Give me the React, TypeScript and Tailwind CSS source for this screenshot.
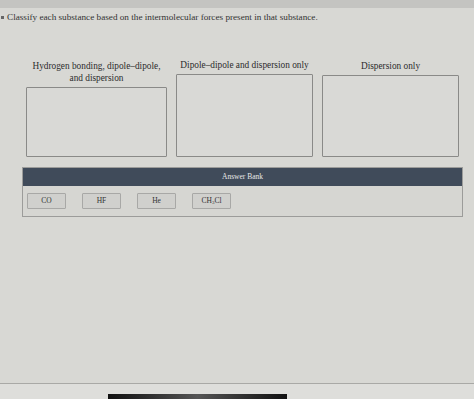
import React from 'react';

const columns = [
  { label: ['Hydrogen bonding, dipole–dipole,', 'and dispersion'], width: 'w-[141px]', height: 'h-[70px]' },
  { label: ['Dipole–dipole and dispersion only'], width: 'w-[137px]', height: 'h-[83px]' },
  { label: ['Dispersion only'], width: 'w-[137px]', height: 'h-[82px]' },
];

const tiles: React.ReactNode[] = [
  'CO',
  'HF',
  'He',
  <>
    CH<sub className="text-[5px] align-baseline relative top-[2px]">3</sub>Cl
  </>,
];

const App: React.FC = () => {
  return (
    <div className="w-[474px] h-[399px] overflow-hidden flex flex-col bg-[#d8d8d4] text-[#2a2a2a] font-['Liberation_Serif',serif]">
      <div className="h-[8px] bg-[#c4c4c1] shrink-0" />

      <div className="flex items-center h-[19px] pl-[1px] text-[9.2px] text-[#333]">
        <span className="w-[3px] h-[3px] bg-[#666] mr-[3px]" />
        <span>Classify each substance based on the intermolecular forces present in that substance.</span>
      </div>

      <div className="flex items-end gap-[9px] pl-[26px] mt-[32px]">
        {columns.map((col, i) => (
          <div key={i} className={`flex flex-col items-center ${col.width}`}>
            <div className="text-[9.3px] leading-[12px] text-center text-[#2c2c2c] mb-[3px]">
              {col.label.map((l, j) => (
                <div key={j}>{l}</div>
              ))}
            </div>
            <div className={`w-full ${col.height} border border-[#8a8a88] rounded-[1px] bg-[#d9d9d6]`} />
          </div>
        ))}
      </div>

      <div className="mx-[22px] mt-[10px] w-[441px] border border-[#9c9c9a] bg-[#d6d6d2]">
        <div className="h-[18px] bg-[#404b5a] flex items-center justify-center text-[7.5px] text-[#e8e8e8]">
          Answer Bank
        </div>
        <div className="flex gap-[16px] pl-[4px] pt-[7px] pb-[7px]">
          {tiles.map((t, i) => (
            <div
              key={i}
              className="w-[39px] h-[16px] flex items-center justify-center border border-[#a8a8a6] rounded-[1px] bg-[#d0d0cd] text-[7.5px] text-[#333]"
            >
              {t}
            </div>
          ))}
        </div>
      </div>

      <div className="flex-1" />
      <div className="h-[1px] bg-[#a9a9a6]" />
      <div className="h-[15px] bg-[#dededb] flex items-end pl-[108px]">
        <div className="w-[179px] h-[5px] bg-gradient-to-r from-[#111] via-[#555] to-[#111]" />
      </div>
    </div>
  );
};

export default App;
